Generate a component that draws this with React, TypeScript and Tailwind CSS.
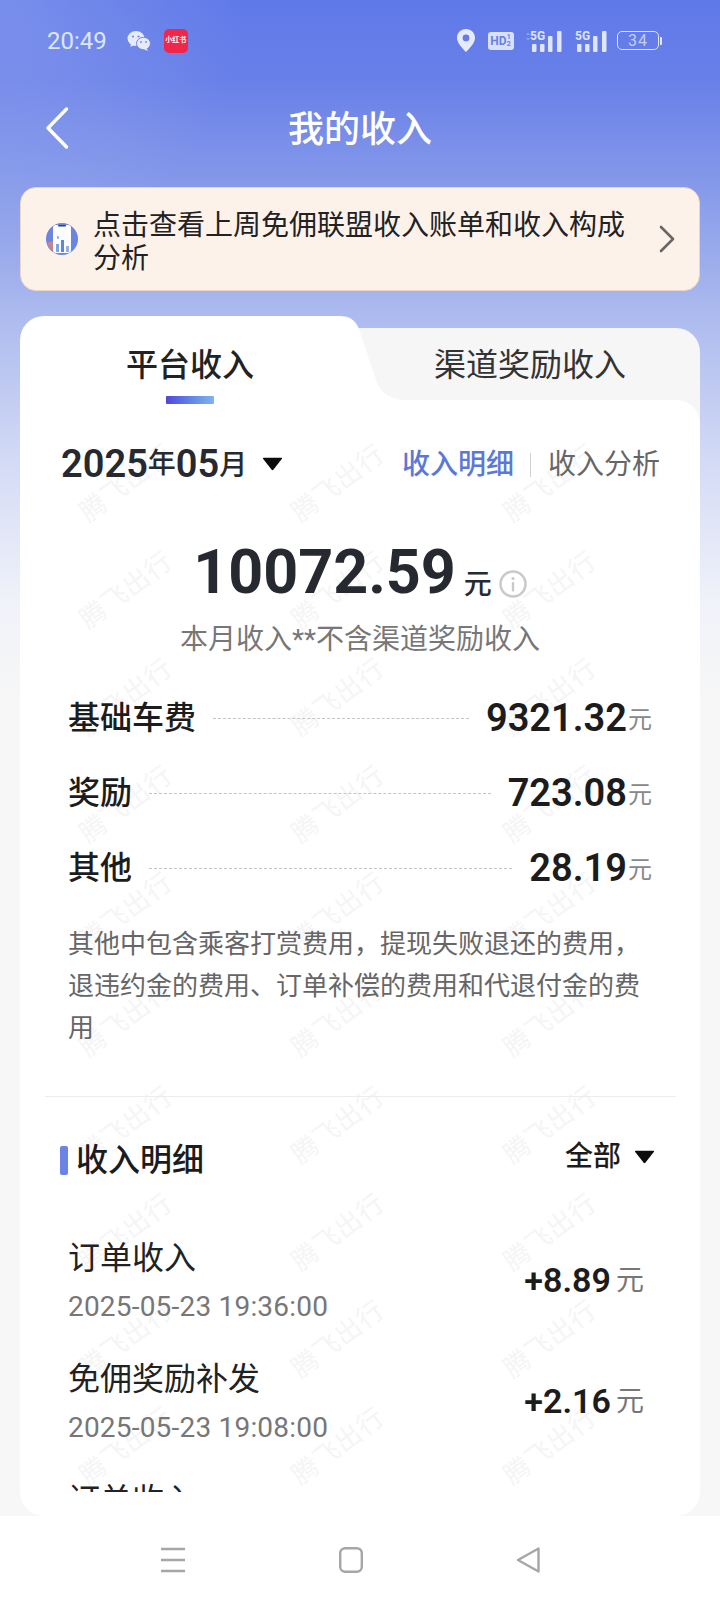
import React from 'react';

const Caret = ({ className }: { className: string }) => (
  <svg viewBox="0 0 20 13" className={className}>
    <path d="M1 1.5 Q0.5 0.5 1.8 0.5 L18.2 0.5 Q19.5 0.5 19 1.5 L10.8 12 Q10 12.8 9.2 12 Z" fill="#0c0c0c" />
  </svg>
);

const Signal = ({ arrows }: { arrows?: boolean }) => (
  <svg width="40" height="24" viewBox="0 0 40 24">
    {arrows && <path d="M2 6 L4 3.5 L6 6 Z M2 9 L4 11.5 L6 9 Z" fill="#8ea0ef" />}
    <text x="6" y="10.5" fontSize="12" fontWeight="700" fill="#dfe5fb" fontFamily="Roboto, sans-serif">5G</text>
    <rect x="8" y="15" width="4.5" height="8" rx="1" fill="#dfe5fb" />
    <rect x="16" y="15" width="4.5" height="8" rx="1" fill="#dfe5fb" />
    <rect x="24" y="7" width="4.5" height="16" rx="1" fill="#dfe5fb" />
    <rect x="33" y="2" width="4.5" height="21" rx="1" fill="#dfe5fb" />
  </svg>
);

const StatusBar = () => (
  <div className="flex h-[80px] items-center justify-between pl-[47px] pr-[58px] pt-[1px] text-[#dfe5fb]">
    <div className="flex items-center">
      <span className="text-[24px] leading-none">20:49</span>
      <svg width="24" height="22" viewBox="0 0 24 22" className="ml-[20px]">
        <ellipse cx="9" cy="8.5" rx="8.5" ry="7.5" fill="#e6ebfc" />
        <path d="M4 13 L3.5 17 L8 14.5 Z" fill="#e6ebfc" />
        <ellipse cx="16.5" cy="13.5" rx="7" ry="6.2" fill="#e6ebfc" stroke="#6f87e8" strokeWidth="1" />
        <path d="M19.5 18 L21 21 L16.5 19 Z" fill="#e6ebfc" />
        <circle cx="6" cy="6.5" r="1.1" fill="#6f87e8" />
        <circle cx="11.5" cy="6.5" r="1.1" fill="#6f87e8" />
        <circle cx="14" cy="12" r="0.9" fill="#6f87e8" />
        <circle cx="19" cy="12" r="0.9" fill="#6f87e8" />
      </svg>
      <span className="ml-[13px] flex h-[24px] w-[24px] items-center justify-center rounded-[5px] bg-[#f0264a] text-[7px] font-bold leading-none text-white">
        小红书
      </span>
    </div>
    <div className="flex items-center">
      <svg width="18" height="23" viewBox="0 0 18 23">
        <path
          fillRule="evenodd"
          d="M9 0 C14 0 18 3.8 18 8.8 C18 14 13 19 9 23 C5 19 0 14 0 8.8 C0 3.8 4 0 9 0 Z M9 5.5 A3.4 3.4 0 1 0 9 12.3 A3.4 3.4 0 1 0 9 5.5 Z"
          fill="#e6ebfc"
        />
      </svg>
      <span className="ml-[13px] flex h-[18px] w-[26px] items-center justify-center rounded-[3px] bg-[#d9e0fa] text-[12px] font-bold leading-none text-[#6880e6]">
        HD<span className="w-[5px] text-[7px] leading-[7px]">1 2</span>
      </span>
      <div className="ml-[10px]">
        <Signal arrows />
      </div>
      <div className="ml-[5px]">
        <Signal />
      </div>
      <div className="ml-[8px] flex items-center">
        <span className="flex h-[19px] w-[42px] items-center justify-center rounded-[5px] border-[1.5px] border-[#dfe5fb] text-[16px] leading-none tracking-[1px] text-[#c3cdf6]">
          34
        </span>
        <span className="ml-[1px] h-[8px] w-[2px] rounded-r-[1px] bg-[#dfe5fb]" />
      </div>
    </div>
  </div>
);

const BannerIcon = () => (
  <svg width="32" height="32" viewBox="0 0 32 32" className="shrink-0">
    <circle cx="16" cy="16" r="16" fill="#6c86e0" />
    <path d="M1 20 Q5 17 9 20 L9 29 Q4 27 1 20 Z" fill="#c9838a" />
    <rect x="7" y="2" width="18" height="28" rx="3" fill="#fdfdff" />
    <rect x="12" y="2" width="8" height="1.5" rx="0.7" fill="#33415f" />
    <rect x="10" y="21" width="3" height="8" fill="#7ea4ea" />
    <rect x="15" y="17" width="3" height="12" fill="#5e86e0" />
    <rect x="20" y="23" width="3" height="6" fill="#8fb0ee" />
    <rect x="11" y="13" width="2" height="3" fill="#9bb7ef" />
  </svg>
);

const Watermarks = () => (
  <div className="pointer-events-none absolute left-0 top-[29px] grid grid-cols-[212px_212px_212px] auto-rows-[107px]">
    {Array.from({ length: 30 }).map((_, i) => (
      <div key={i} className="flex items-center justify-center">
        <span className="-rotate-[37deg] whitespace-nowrap text-[26px] leading-none tracking-[1px] text-[#f5f5f6]">
          腾飞出行
        </span>
      </div>
    ))}
  </div>
);

const rows = [
  { label: '基础车费', value: '9321.32' },
  { label: '奖励', value: '723.08' },
  { label: '其他', value: '28.19' },
];

const records = [
  { title: '订单收入', time: '2025-05-23 19:36:00', amount: '+8.89' },
  { title: '免佣奖励补发', time: '2025-05-23 19:08:00', amount: '+2.16' },
  { title: '订单收入' },
];

const IncomeCard = () => (
  <div className="relative mx-[20px] mt-[25px] flex-1 overflow-hidden rounded-b-[24px]">
    {/* Tabs */}
    <div className="relative flex h-[84px]">
      <div className="flex w-[320px] justify-center rounded-tl-[24px] bg-white pl-[20px] pt-[29px]">
        <div className="relative z-10 text-[32px] font-medium leading-[40px] text-[#222]">
          平台收入
          <div className="absolute left-[40px] top-[51px] h-[8px] w-[48px] rounded-[1px] bg-gradient-to-r from-[#4f46d8] to-[#7fb5ea]" />
        </div>
      </div>
      <div className="mt-[12px] h-[100px] flex-1 rounded-tr-[24px] bg-[#f6f6f6] pl-[94px] pt-[17px] text-[32px] leading-[40px] text-[#333]">
        渠道奖励收入
      </div>
      <svg width="70" height="84" viewBox="0 0 70 84" className="absolute left-[320px] top-0">
        <path d="M0 0 Q14 0 19 13 L36 64 Q42 84 68 84 L0 84 Z" fill="#ffffff" />
      </svg>
    </div>

    {/* Panel */}
    <div className="relative h-[1116px] overflow-hidden rounded-tr-[24px] bg-white">
      <Watermarks />
      <div className="relative">
        <div className="mt-[42px] flex h-[44px] items-center justify-between pl-[41px] pr-[40px]">
          <div className="flex items-center">
            <span className="text-[38px] font-semibold leading-none text-[#262a30]">2025</span>
            <span className="text-[28px] font-medium leading-none text-[#262a30]">年</span>
            <span className="text-[38px] font-semibold leading-none text-[#262a30]">05</span>
            <span className="mt-[4px] text-[28px] font-medium leading-none text-[#262a30]">月</span>
            <Caret className="ml-[15px] h-[14px] w-[21px]" />
          </div>
          <div className="mt-[2px] flex items-center text-[28px] leading-none">
            <span className="font-medium text-[#5b78d8]">收入明细</span>
            <span className="ml-[16px] mr-[17px] h-[24px] w-[1px] bg-[#d0d0d0]" />
            <span className="text-[#666]">收入分析</span>
          </div>
        </div>

        <div className="mt-[50px] flex h-[72px] items-center justify-center">
          <span className="text-[61px] font-bold leading-none text-[#262a30]">10072.59</span>
          <span className="ml-[8px] mt-[26px] text-[28px] font-medium leading-none text-[#262a30]">元</span>
          <svg width="28" height="28" viewBox="0 0 28 28" className="ml-[7px] mt-[24px]">
            <circle cx="14" cy="14" r="12.5" fill="none" stroke="#c9c9c9" strokeWidth="2.5" />
            <circle cx="14" cy="8.5" r="1.6" fill="#c9c9c9" />
            <rect x="12.8" y="12" width="2.4" height="9.5" rx="1" fill="#c9c9c9" />
          </svg>
        </div>
        <div className="mt-[14px] text-center text-[28px] leading-[36px] text-[#777]">本月收入**不含渠道奖励收入</div>

        <div className="mt-[40px] flex flex-col gap-[35px] pl-[48px] pr-[48px]">
          {rows.map((r) => (
            <div key={r.label} className="flex h-[40px] items-center">
              <span className="text-[32px] font-medium leading-[40px] text-[#1c1c1c]">{r.label}</span>
              <span className="mx-[17px] h-0 flex-1 border-t border-dashed border-[#c4c4c4]" />
              <span className="text-[38px] font-semibold leading-none text-[#1c1c1c]">{r.value}</span>
              <span className="ml-[1px] mt-[4px] text-[24px] leading-none text-[#888]">元</span>
            </div>
          ))}
        </div>

        <p className="mt-[35px] w-[638px] pl-[48px] text-[26px] leading-[42px] text-[#666]">
          其他中包含乘客打赏费用，提现失败退还的费用，退违约金的费用、订单补偿的费用和代退付金的费用
        </p>

        <div className="ml-[25px] mr-[24px] mt-[47px] h-[1px] bg-[#ececec]" />

        <div className="mt-[43px] flex h-[40px] items-center justify-between pl-[40px] pr-[45px]">
          <div className="flex items-center">
            <span className="h-[29px] w-[8px] rounded-[2px] bg-[#6a83e4]" />
            <span className="ml-[8px] text-[32px] font-medium leading-[40px] text-[#1c1c1c]">收入明细</span>
          </div>
          <div className="-mt-[6px] flex items-center">
            <span className="text-[28px] font-medium leading-none text-[#1c1c1c]">全部</span>
            <Caret className="ml-[13px] h-[14px] w-[21px]" />
          </div>
        </div>

        <div className="mt-[58px] flex h-[254px] flex-col gap-[34px] overflow-hidden pl-[48px] pr-[56px]">
          {records.map((r, i) => (
            <div key={i} className="flex shrink-0 items-center justify-between">
              <div>
                <div className="text-[32px] leading-[40px] text-[#222]">{r.title}</div>
                {r.time && <div className="mt-[11px] text-[28px] leading-[36px] tracking-[0.2px] text-[#777]">{r.time}</div>}
              </div>
              {r.amount && (
                <div className="-mt-[4px] flex items-center">
                  <span className="text-[34px] font-semibold leading-none text-[#1c1c1c]">{r.amount}</span>
                  <span className="ml-[5px] mt-[3px] text-[28px] leading-none text-[#777]">元</span>
                </div>
              )}
            </div>
          ))}
        </div>
      </div>
    </div>
  </div>
);

const NavBar = () => (
  <div className="flex h-[88px] shrink-0 items-start justify-between bg-white pl-[160px] pr-[180px] pt-[31px]">
    <svg width="26" height="26" viewBox="0 0 26 26" fill="none" stroke="#a6a6a6" strokeWidth="2.4">
      <path d="M1 2 H25 M1 13 H25 M1 24 H25" />
    </svg>
    <svg width="24" height="26" viewBox="0 0 24 26" fill="none" stroke="#a6a6a6" strokeWidth="2.4">
      <rect x="1.2" y="1.2" width="21.6" height="23.6" rx="5" />
    </svg>
    <svg width="24" height="26" viewBox="0 0 24 26" fill="none" stroke="#a6a6a6" strokeWidth="2.4" strokeLinejoin="round">
      <path d="M22.5 1.5 L22.5 24.5 L2 13 Z" />
    </svg>
  </div>
);

export default function App() {
  return (
    <div className="flex h-[1604px] w-[720px] flex-col overflow-hidden bg-[#f7f7f7] font-[family-name:Roboto,'Noto_Sans_CJK_SC',sans-serif]">
      <div className="relative flex flex-1 flex-col overflow-hidden bg-[linear-gradient(180deg,#5f79e8_0px,#6880e8_80px,#8a9dea_200px,#abb9ee_310px,#d3daf5_460px,#f0f2f9_600px,#f7f7f7_700px)]">
        <div className="pointer-events-none absolute left-0 top-0 h-[260px] w-[240px] bg-[radial-gradient(circle_at_0px_0px,rgba(255,255,255,0.16),rgba(255,255,255,0)_70%)]" />
        <div className="relative flex flex-1 flex-col">
          <StatusBar />
          <div className="relative flex h-[96px] items-center justify-center">
            <svg width="24" height="42" viewBox="0 0 24 42" fill="none" className="absolute left-[45px] top-[27px]">
              <path d="M21.5 2 L3 21 L21.5 40" stroke="#ffffff" strokeWidth="3.4" strokeLinecap="round" strokeLinejoin="round" />
            </svg>
            <span className="mt-[4px] text-[36px] font-medium leading-none text-white">我的收入</span>
          </div>

          <div className="mx-[20px] mt-[11px] flex h-[104px] items-center rounded-[16px] border border-[#ecd5c3] bg-[#fdf2ea] pl-[25px] pr-[24px]">
            <BannerIcon />
            <div className="ml-[15px] w-[540px] pt-[6px] text-[28px] leading-[33px] text-[#222]">
              点击查看上周免佣联盟收入账单和收入构成分析
            </div>
            <svg width="16" height="28" viewBox="0 0 16 28" fill="none" className="ml-auto">
              <path d="M2 2 L14 14 L2 26" stroke="#666" strokeWidth="2.6" strokeLinecap="round" strokeLinejoin="round" />
            </svg>
          </div>

          <IncomeCard />
        </div>
      </div>
      <NavBar />
    </div>
  );
}
